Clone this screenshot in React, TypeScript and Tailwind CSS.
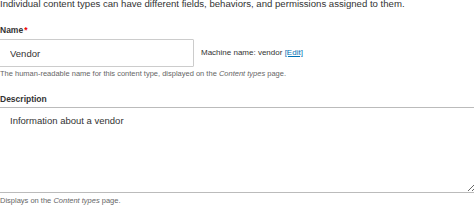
export default function App() {
  return (
    <div className="-ml-px w-[478px] overflow-hidden bg-white font-['Liberation_Sans',Arial,sans-serif] text-[#333]">
      <p className="-mt-[2px] ml-px h-[12px] whitespace-nowrap text-[9.6px] leading-[12px]">
        Individual content types can have different fields, behaviors, and permissions assigned to them.
      </p>

      <div className="mt-[15px] ml-px h-[11px] text-[8.5px] font-bold leading-[11px]">
        Name<span className="ml-px text-[#e00]">*</span>
      </div>

      <div className="mt-[3px] flex items-center">
        <input
          readOnly
          value="Vendor"
          className="h-[28px] w-[195px] rounded-[1px] border border-[#ccc] px-[10px] text-[9.5px] text-[#333] outline-none"
        />
        <span className="ml-[7px] whitespace-nowrap text-[8px] leading-[12px]">
          Machine name: vendor{" "}
          <a href="#" className="text-[#0071b3] underline">
            [Edit]
          </a>
        </span>
      </div>

      <p className="mt-[2px] ml-px h-[10px] text-[7.5px] leading-[10px] text-[#666]">
        The human-readable name for this content type, displayed on the <em>Content types</em> page.
      </p>

      <div className="mt-[15px] ml-px h-[11px] text-[8.5px] font-bold leading-[11px]">Description</div>

      <textarea
        readOnly
        value="Information about a vendor"
        className="mt-[2px] block h-[86px] w-[478px] resize-y border border-[#bbb] px-[10px] pt-[7px] text-[9.5px] leading-[12px] text-[#333] outline-none"
      />

      <p className="mt-[3px] ml-px text-[7.5px] leading-[10px] text-[#666]">
        Displays on the <em>Content types</em> page.
      </p>
    </div>
  );
}
